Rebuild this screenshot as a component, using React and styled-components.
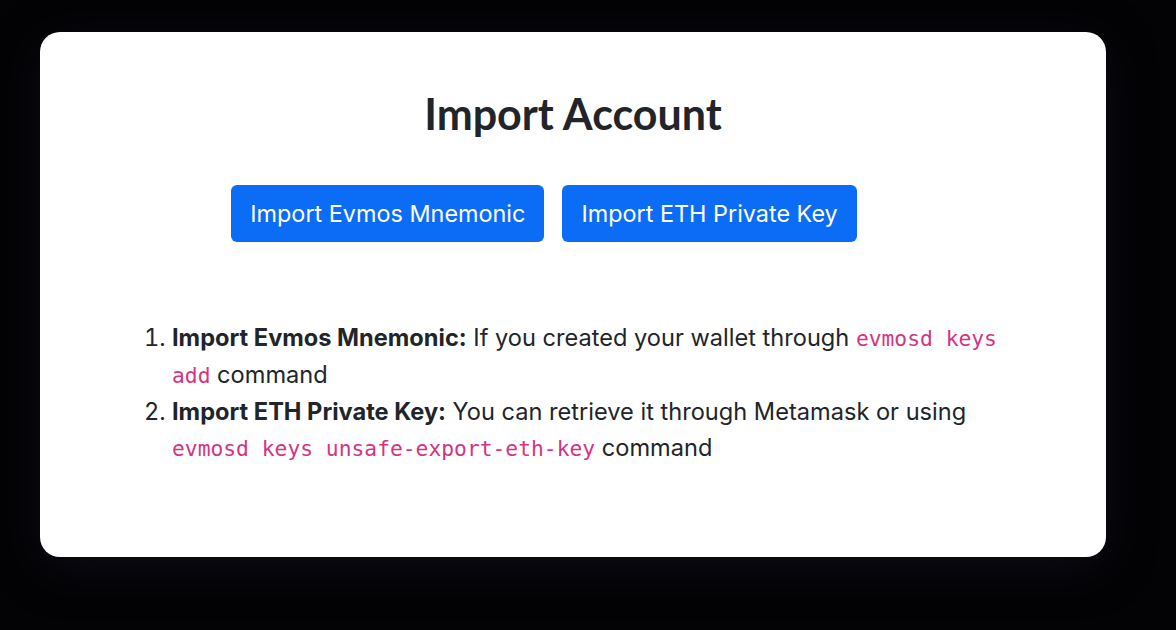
import React from 'react'
import styled, { createGlobalStyle } from 'styled-components'

const Global = createGlobalStyle`
    html, body {
        margin: 0;
        padding: 0;
        background: #030305;
    }
    * { box-sizing: border-box; }
`

const Page = styled.div`
    width: 1176px;
    height: 630px;
    padding: 32px 70px 73px 40px;
    background: #030305;
`

const Card = styled.div`
    height: 100%;
    background: #fff;
    border-radius: 20px;
    box-shadow: 0 10px 50px rgba(30, 30, 50, 0.35);
    padding: 56px 100px 0;
    display: flex;
    flex-direction: column;
    align-items: center;
    font-family: Inter, "Liberation Sans", sans-serif;
    color: #212529;
`

const Title = styled.h2`
    margin: 0;
    font-family: Lato, "Open Sans", sans-serif;
    font-weight: 700;
    font-size: 43px;
    line-height: 52px;
    color: #212529;
`

const ButtonRow = styled.div`
    display: flex;
    gap: 18px;
    margin-top: 45px;
    margin-right: 58px;
`

const Button = styled.button`
    height: 57px;
    padding: 0 19px;
    border: none;
    border-radius: 6px;
    background: #0b6cf6;
    color: #fff;
    font-family: Inter, "Liberation Sans", sans-serif;
    font-size: 23.4px;
    cursor: pointer;
`

const List = styled.ol`
    align-self: stretch;
    margin: 78px 0 0;
    padding-left: 32px;
    font-size: 23.6px;
    line-height: 36px;
`

const Item = styled.li`
    padding-left: 0;
`

const Code = styled.code`
    font-family: "DejaVu Sans Mono", "Liberation Mono", monospace;
    font-size: 21.3px;
    color: #d63384;
`

const App = () => (
    <>
        <Global />
        <Page>
            <Card>
                <Title>Import Account</Title>
                <ButtonRow>
                    <Button>Import Evmos Mnemonic</Button>
                    <Button>Import ETH Private Key</Button>
                </ButtonRow>
                <List>
                    <Item>
                        <strong>Import Evmos Mnemonic:</strong> If you created your wallet through{' '}
                        <Code>evmosd keys add</Code> command
                    </Item>
                    <Item>
                        <strong>Import ETH Private Key:</strong> You can retrieve it through Metamask or using{' '}
                        <Code>evmosd keys unsafe-export-eth-key</Code> command
                    </Item>
                </List>
            </Card>
        </Page>
    </>
)

export default App
